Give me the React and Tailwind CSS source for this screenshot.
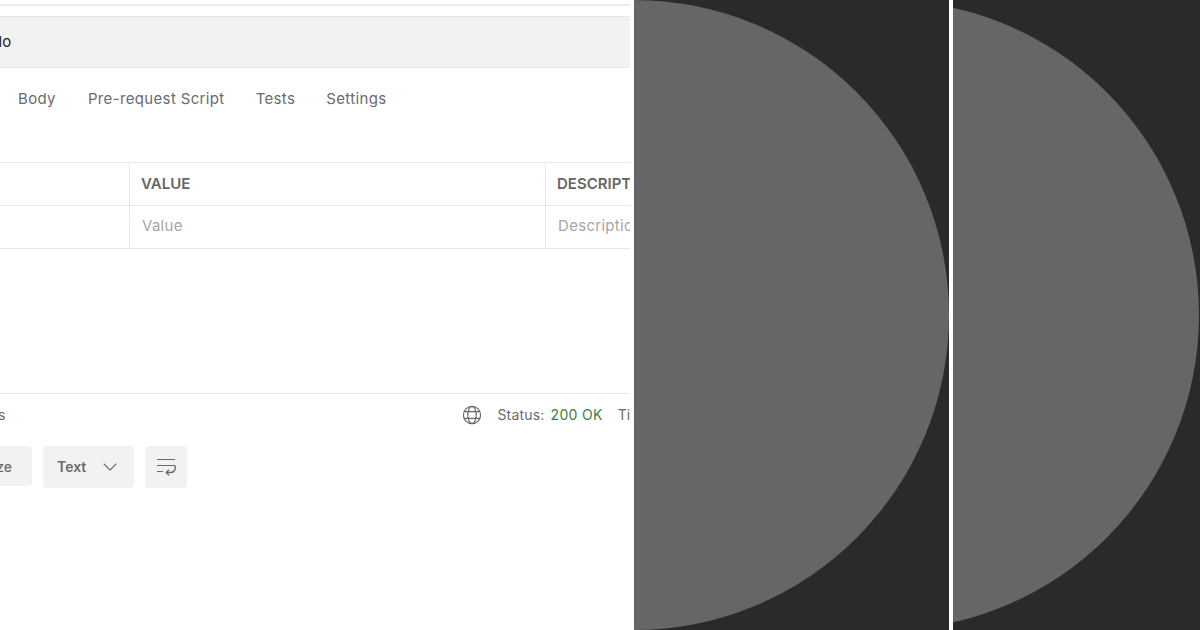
import { ChevronDown } from 'lucide-react';

const TABS = [
  { label: 'Body', className: 'ml-[18px]' },
  { label: 'Pre-request Script', className: 'ml-[32px]' },
  { label: 'Tests', className: 'ml-[31px]' },
  { label: 'Settings', className: 'ml-[31px]' },
];

const GlobeIcon = () => (
  <svg width="20" height="20" viewBox="0 0 20 20" fill="none" stroke="#666" strokeWidth="1.2">
    <circle cx="10" cy="10" r="8.6" />
    <ellipse cx="10" cy="10" rx="4.2" ry="8.6" />
    <path d="M2.4 6.6h15.2M2.4 13.4h15.2" />
  </svg>
);

const WrapIcon = () => (
  <svg width="20" height="18" viewBox="0 0 20 18" fill="none" stroke="#6b6b6b" strokeWidth="1.2">
    <path d="M1 1.5h18M1 7.5h18M1 13.5h6" />
    <path d="M18.5 7.5c.8 1 1 2.2.6 3.6-.6 2-2.2 3.4-4.1 3.4h-4.5" strokeWidth="1.4" />
    <path d="M13 11.8l-2.7 2.7 2.7 2.7" strokeWidth="1.4" />
  </svg>
);

const Row = ({ first, second }) => (
  <div className="flex h-[43px] border-b border-[#e8e8e8]">
    <div className="w-[130px] shrink-0 border-r border-[#e8e8e8]" />
    <div className="w-[416px] shrink-0 border-r border-[#e8e8e8] pl-[11px] flex items-center">{first}</div>
    <div className="pl-[11px] flex items-center whitespace-nowrap">{second}</div>
  </div>
);

const CirclePanel = ({ className, circleClass }) => (
  <div className={`h-[630px] shrink-0 overflow-hidden bg-[#2a2a2a] ${className}`}>
    <div className={`w-[630px] h-[630px] rounded-full bg-[#666666] ${circleClass}`} />
  </div>
);

export default function App() {
  return (
    <div className="flex w-[1200px] h-[630px] overflow-hidden bg-white font-['Inter',sans-serif]">
      <div className="w-[630px] h-[630px] shrink-0 overflow-hidden">
        <div className="mt-[4px] h-[2px] bg-[#ececec]" />
        <div className="mt-[10px] h-[52px] flex items-center bg-[#f2f2f2] border-y border-[#e6e6e6] rounded-r-[3px] overflow-hidden">
          <span className="ml-[-25px] text-[15px] text-[#222]">Hello</span>
        </div>

        <div className="mt-[19px] h-[24px] flex items-center text-[15px] text-[#6b6b6b] tracking-[0.35px] whitespace-nowrap">
          {TABS.map(tab => (
            <span key={tab.label} className={tab.className}>{tab.label}</span>
          ))}
        </div>

        <div className="mt-[51px] border-t border-[#e8e8e8]">
          <Row
            first={<span className="text-[15px] font-semibold text-[#666]">VALUE</span>}
            second={<span className="text-[15px] font-semibold text-[#666]">DESCRIPTION</span>}
          />
          <Row
            first={<span className="mt-[-2px] ml-[1px] text-[15px] tracking-[0.3px] text-[#a6a6a6]">Value</span>}
            second={<span className="mt-[-2px] ml-[1px] text-[15px] tracking-[0.3px] text-[#a6a6a6]">Description</span>}
          />
        </div>

        <div className="mt-[144px] border-t border-[#e8e8e8] h-[43px] flex items-center whitespace-nowrap text-[14px] text-[#6b6b6b]">
          <span className="ml-[-2px] mb-[2px]">s</span>
          <span className="ml-[457px] mr-[15px] flex"><GlobeIcon /></span>
          <span className="mb-[2px] tracking-[0.2px]">Status:</span>
          <span className="ml-[6px] mb-[2px] text-[#3b7f45] tracking-[0.3px]">200 OK</span>
          <span className="ml-[15px] mb-[2px]">Time</span>
        </div>

        <div className="mt-[10px] flex items-center">
          <div className="w-[32px] h-[40px] mb-[2px] bg-[#f2f2f2] rounded-r-[4px] flex items-center justify-end pr-[20px] text-[14px] font-medium text-[#6b6b6b] overflow-hidden whitespace-nowrap">
            <span className="shrink-0">ze</span>
          </div>
          <div className="ml-[11px] w-[91px] h-[42px] bg-[#f2f2f2] rounded-[4px] flex items-center pl-[14px] text-[14px] font-semibold text-[#6b6b6b]">
            <span className="mb-[2px]">Text</span>
            <ChevronDown className="ml-[12px] w-[24px] h-[24px] text-[#6b6b6b]" strokeWidth={1.1} />
          </div>
          <div className="ml-[11px] w-[42px] h-[42px] bg-[#f2f2f2] rounded-[4px] flex items-center justify-center">
            <WrapIcon />
          </div>
        </div>
      </div>

      <div className="w-[4px] shrink-0" />
      <CirclePanel className="w-[315px]" circleClass="ml-[-315px]" />
      <div className="w-[4px] shrink-0" />
      <CirclePanel className="w-[247px]" circleClass="ml-[-384px]" />
    </div>
  );
}
